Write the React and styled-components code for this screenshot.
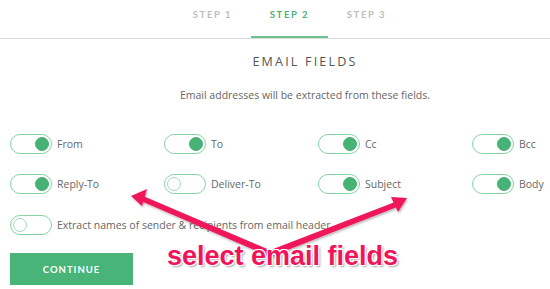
import React from "react";
import styled, { createGlobalStyle } from "styled-components";

const Global = createGlobalStyle`
  html, body { margin: 0; padding: 0; background: #fff; }
  body { font-family: "Open Sans", "Liberation Sans", sans-serif; width: 550px; height: 289px; overflow: hidden; }
`;

const Page = styled.div`
  position: relative;
  width: 550px;
  height: 289px;
  overflow: hidden;
`;

const StepBar = styled.div`
  height: 38px;
  border-bottom: 1px solid #dcdcdc;
  display: flex;
  padding-left: 174px;
`;

const Step = styled.div`
  width: 77px;
  height: 38px;
  box-sizing: border-box;
  display: flex;
  align-items: center;
  justify-content: center;
  padding-bottom: 8px;
  font-family: "Lato", "Liberation Sans", sans-serif;
  font-weight: 700;
  font-size: 9.5px;
  letter-spacing: 1.6px;
  color: ${(p) => (p.$active ? "#4cb27a" : "#bdbdbd")};
  border-bottom: 2px solid ${(p) => (p.$active ? "#6cc291" : "transparent")};
  margin-bottom: -1px;
`;

const Title = styled.div`
  margin-top: 15px;
  padding-left: 60px;
  text-align: center;
  font-weight: 400;
  font-size: 12.5px;
  letter-spacing: 2.2px;
  color: #555;
  line-height: 16px;
`;

const Subtitle = styled.div`
  margin-top: 17px;
  padding-left: 60px;
  text-align: center;
  font-size: 10.5px;
  color: #666;
  line-height: 16px;
`;

const Grid = styled.div`
  margin-top: 31px;
  padding-left: 10px;
  display: grid;
  grid-template-columns: repeat(3, 154px) 1fr;
  row-gap: 20px;
`;

const Row = styled.label`
  display: flex;
  align-items: center;
  gap: 5px;
  font-size: 10.5px;
  color: #666;
  height: 20px;
  white-space: nowrap;
`;

const Track = styled.span`
  position: relative;
  width: 42px;
  height: 20px;
  box-sizing: border-box;
  border: 1px solid #86d2a5;
  border-radius: 10px;
  background: #fff;
  flex: none;
`;

const Knob = styled.span`
  position: absolute;
  top: 2px;
  left: ${(p) => (p.$on ? "24px" : "2px")};
  width: 14px;
  height: 14px;
  box-sizing: border-box;
  border-radius: 50%;
  background: ${(p) => (p.$on ? "#47b276" : "#fff")};
  border: 1px solid ${(p) => (p.$on ? "#47b276" : "#a9d9bb")};
`;

const Wide = styled.div`
  margin-top: 21px;
  padding-left: 10px;
`;

const Button = styled.button`
  margin: 18px 0 0 10px;
  width: 123px;
  height: 32px;
  border: none;
  background: #48b478;
  color: #fff;
  font-family: "Lato", "Liberation Sans", sans-serif;
  font-weight: 700;
  font-size: 9.5px;
  letter-spacing: 1px;
  display: block;
`;

const Overlay = styled.svg`
  position: absolute;
  left: 0;
  top: 0;
  pointer-events: none;
`;

const Annot = styled.div`
  position: absolute;
  left: 167px;
  top: 241px;
  font-family: "Liberation Sans", Arial, sans-serif;
  font-weight: 700;
  font-size: 27px;
  color: #f0145a;
  text-shadow:
    -1px -1px 0 #fff, 1px -1px 0 #fff, -1px 1px 0 #fff, 1px 1px 0 #fff,
    2px 2px 2px rgba(0,0,0,0.35);
`;

const Toggle = ({ on, label }) => (
  <Row>
    <Track>
      <Knob $on={on} />
    </Track>
    {label}
  </Row>
);

const fields = [
  ["From", true],
  ["To", true],
  ["Cc", true],
  ["Bcc", true],
  ["Reply-To", true],
  ["Deliver-To", false],
  ["Subject", true],
  ["Body", true],
];

export default function App() {
  return (
    <Page>
      <Global />
      <StepBar>
        <Step>STEP 1</Step>
        <Step $active>STEP 2</Step>
        <Step>STEP 3</Step>
      </StepBar>
      <Title>EMAIL FIELDS</Title>
      <Subtitle>Email addresses will be extracted from these fields.</Subtitle>
      <Grid>
        {fields.map(([l, on]) => (
          <Toggle key={l} label={l} on={on} />
        ))}
      </Grid>
      <Wide>
        <Toggle on={false} label="Extract names of sender & recipients from email header" />
      </Wide>
      <Button>CONTINUE</Button>
      <Overlay width="550" height="289" viewBox="0 0 550 289">
        <defs>
          <filter id="sh" x="-20%" y="-20%" width="140%" height="140%">
            <feDropShadow dx="1" dy="1.5" stdDeviation="1" floodColor="#000" floodOpacity="0.3" />
          </filter>
        </defs>
        <g fill="#f0145a" filter="url(#sh)">
          <polygon points="272,251 268,256 141,201 143,196" />
          <polygon points="131,196 147,189 142,206" />
          <polygon points="272,256 268,251 395,202 397,207" />
          <polygon points="407,198 391,197 398,212" />
        </g>
      </Overlay>
      <Annot>select email fields</Annot>
    </Page>
  );
}
